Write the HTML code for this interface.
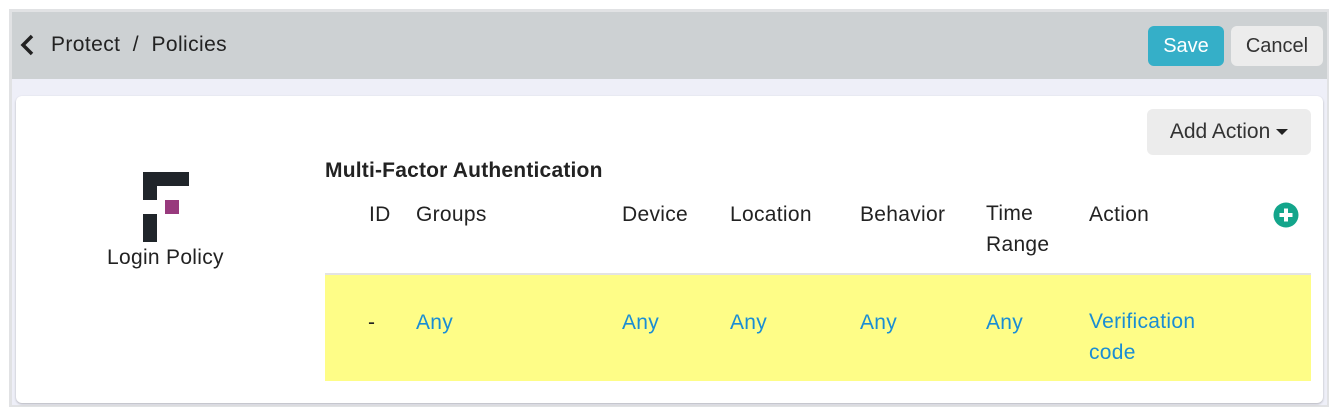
<!DOCTYPE html>
<html><head><style>
*{margin:0;padding:0;box-sizing:border-box}
body{width:1329px;height:414px;background:#fff;font-family:"Liberation Sans",sans-serif;position:relative;overflow:hidden}
.frame{position:absolute;left:9px;top:9px;width:1320px;height:398px;background:#e1e2e4}
.hdr{position:absolute;left:12px;top:12px;width:1315px;height:67px;background:#cdd1d3}
.lav{position:absolute;left:12px;top:79px;width:1315px;height:326px;background:#eeeff8}
.card{position:absolute;left:16px;top:96px;width:1307px;height:307px;background:#fff;border-radius:6px;box-shadow:0 1px 2px rgba(0,0,0,.25)}
.t{position:absolute;white-space:nowrap;font-size:21px;color:#222;letter-spacing:0.3px}
.b{color:#1a8dd4}
.btn{position:absolute;border-radius:6px;font-size:20px;text-align:center}
</style></head><body>
<div class="frame"></div>
<div class="hdr"></div>
<div class="lav"></div>
<svg style="position:absolute;left:18px;top:33px" width="18" height="24"><path d="M14 3 L5 12 L14 21" stroke="#222" stroke-width="3.5" fill="none"/></svg>
<div class="t" style="left:51px;top:33px;font-size:21px;letter-spacing:0.4px">Protect&nbsp; /&nbsp; Policies</div>
<div class="btn" style="left:1148px;top:26px;width:76px;height:40px;background:#35afc8;color:#fff;line-height:40px">Save</div>
<div class="btn" style="left:1231px;top:26px;width:92px;height:40px;background:#ececec;color:#333;line-height:40px">Cancel</div>
<div class="card"></div>
<div style="position:absolute;left:143px;top:172px;width:46px;height:14px;background:#20252a"></div>
<div style="position:absolute;left:143px;top:172px;width:14px;height:28px;background:#20252a"></div>
<div style="position:absolute;left:143px;top:214px;width:14px;height:28px;background:#20252a"></div>
<div style="position:absolute;left:165px;top:200px;width:14px;height:14px;background:#983a7d"></div>
<div class="t" style="left:107px;top:246px">Login Policy</div>
<div class="btn" style="left:1147px;top:109px;width:164px;height:46px;background:#ececec;color:#333;line-height:46px;font-size:21px">Add Action <span style="display:inline-block;border-left:6px solid transparent;border-right:6px solid transparent;border-top:6px solid #222;vertical-align:middle"></span></div>
<div class="t" style="left:325px;top:159px;font-weight:bold;font-size:21px;letter-spacing:0.2px">Multi-Factor Authentication</div>
<div class="t" style="left:369px;top:203px">ID</div>
<div class="t" style="left:416px;top:203px">Groups</div>
<div class="t" style="left:622px;top:203px">Device</div>
<div class="t" style="left:730px;top:203px">Location</div>
<div class="t" style="left:860px;top:203px">Behavior</div>
<div class="t" style="left:986px;top:198px;line-height:31px">Time<br>Range</div>
<div class="t" style="left:1089px;top:203px">Action</div>
<svg style="position:absolute;left:1273px;top:202px" width="26" height="26"><circle cx="13" cy="13" r="12.5" fill="#13a58b"/><path d="M13 6.5V19.5M6.5 13H19.5" stroke="#fff" stroke-width="4"/></svg>
<div style="position:absolute;left:325px;top:273px;width:986px;height:2px;background:#e3e3e3"></div>
<div style="position:absolute;left:325px;top:275px;width:986px;height:106px;background:#fefd87"></div>
<div class="t" style="left:368px;top:311px">-</div>
<div class="t b" style="left:416px;top:311px">Any</div>
<div class="t b" style="left:622px;top:311px">Any</div>
<div class="t b" style="left:730px;top:311px">Any</div>
<div class="t b" style="left:860px;top:311px">Any</div>
<div class="t b" style="left:986px;top:311px">Any</div>
<div class="t b" style="left:1089px;top:306px;line-height:31px">Verification<br>code</div>
</body></html>
